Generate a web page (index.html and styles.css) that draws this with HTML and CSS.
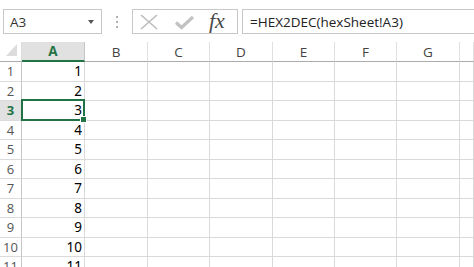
FILE: index.html
```html
<!DOCTYPE html>
<html>
<head>
<meta charset="utf-8">
<link rel="stylesheet" href="styles.css">
</head>
<body>
<div class="toolbar">
  <div class="namebox"><span class="namebox-text">A3</span><span class="dropdown"></span></div>
  <div class="sep"><span class="dot"></span><span class="dot"></span><span class="dot"></span></div>
  <div class="fxbox">
    <svg class="icon-x" width="20" height="16" viewBox="0 0 20 16"><path d="M2 1 L18 15 M18 1 L2 15" stroke="#bcbcbc" stroke-width="1.6" fill="none"/></svg>
    <svg class="icon-check" width="21" height="16" viewBox="0 0 21 16"><path d="M2 8.5 L7.5 13.5 L19 3" stroke="#c2c2c2" stroke-width="3.2" fill="none"/></svg>
    <span class="fx">fx</span>
  </div>
  <div class="formula">=HEX2DEC(hexSheet!A3)</div>
</div>
<div class="sheet">
  <div class="corner"><span class="tri"></span></div>
  <div class="colhead active">A</div>
  <div class="colhead">B</div>
  <div class="colhead">C</div>
  <div class="colhead">D</div>
  <div class="colhead">E</div>
  <div class="colhead">F</div>
  <div class="colhead">G</div>
  <div class="colhead"></div>

  <div class="rowhead">1</div><div class="cell num">1</div><div class="cell"></div><div class="cell"></div><div class="cell"></div><div class="cell"></div><div class="cell"></div><div class="cell"></div><div class="cell"></div>
  <div class="rowhead">2</div><div class="cell num">2</div><div class="cell"></div><div class="cell"></div><div class="cell"></div><div class="cell"></div><div class="cell"></div><div class="cell"></div><div class="cell"></div>
  <div class="rowhead active">3</div><div class="cell num sel">3</div><div class="cell"></div><div class="cell"></div><div class="cell"></div><div class="cell"></div><div class="cell"></div><div class="cell"></div><div class="cell"></div>
  <div class="rowhead">4</div><div class="cell num">4</div><div class="cell"></div><div class="cell"></div><div class="cell"></div><div class="cell"></div><div class="cell"></div><div class="cell"></div><div class="cell"></div>
  <div class="rowhead">5</div><div class="cell num">5</div><div class="cell"></div><div class="cell"></div><div class="cell"></div><div class="cell"></div><div class="cell"></div><div class="cell"></div><div class="cell"></div>
  <div class="rowhead">6</div><div class="cell num">6</div><div class="cell"></div><div class="cell"></div><div class="cell"></div><div class="cell"></div><div class="cell"></div><div class="cell"></div><div class="cell"></div>
  <div class="rowhead">7</div><div class="cell num">7</div><div class="cell"></div><div class="cell"></div><div class="cell"></div><div class="cell"></div><div class="cell"></div><div class="cell"></div><div class="cell"></div>
  <div class="rowhead">8</div><div class="cell num">8</div><div class="cell"></div><div class="cell"></div><div class="cell"></div><div class="cell"></div><div class="cell"></div><div class="cell"></div><div class="cell"></div>
  <div class="rowhead">9</div><div class="cell num">9</div><div class="cell"></div><div class="cell"></div><div class="cell"></div><div class="cell"></div><div class="cell"></div><div class="cell"></div><div class="cell"></div>
  <div class="rowhead">10</div><div class="cell num">10</div><div class="cell"></div><div class="cell"></div><div class="cell"></div><div class="cell"></div><div class="cell"></div><div class="cell"></div><div class="cell"></div>
  <div class="rowhead">11</div><div class="cell num">11</div><div class="cell"></div><div class="cell"></div><div class="cell"></div><div class="cell"></div><div class="cell"></div><div class="cell"></div><div class="cell"></div>
</div>
</body>
</html>
```

FILE: styles.css
```css
html, body {
  margin: 0;
  padding: 0;
  background: #fff;
  overflow: hidden;
  width: 474px;
  height: 267px;
}
body {
  font-family: "Open Sans", "Noto Sans", sans-serif;
  color: #222;
}
.toolbar {
  display: flex;
  height: 25px;
  padding: 9px 0 0 3px;
  box-sizing: content-box;
}
.namebox {
  width: 99px;
  box-sizing: border-box;
  border: 1px solid #c8c8c8;
  display: flex;
  align-items: center;
  padding-left: 6px;
  font-size: 13.5px;
  color: #333;
}
.namebox-text {
  flex: 1;
}
.dropdown {
  width: 0;
  height: 0;
  border-left: 3.5px solid transparent;
  border-right: 3.5px solid transparent;
  border-top: 4px solid #555;
  margin-right: 7px;
}
.sep {
  width: 30px;
  display: flex;
  flex-direction: column;
  align-items: center;
  justify-content: center;
  gap: 3px;
}
.dot {
  width: 2px;
  height: 2px;
  background: #b0b0b0;
}
.fxbox {
  width: 106px;
  box-sizing: border-box;
  border: 1px solid #c8c8c8;
  display: flex;
  align-items: center;
  padding-left: 6px;
}
.icon-check {
  margin-left: 15px;
}
.fx {
  margin-left: 14px;
  font-family: "Liberation Serif", "DejaVu Serif", serif;
  font-style: italic;
  font-size: 22px;
  color: #4a4a4a;
  line-height: 1;
  margin-top: -2px;
}
.formula {
  flex: 1;
  margin-left: 4px;
  margin-right: -2px;
  border: 1px solid #c8c8c8;
  display: flex;
  align-items: center;
  padding-left: 7px;
  font-size: 13.5px;
  color: #222;
}
.sheet {
  margin-top: 8px;
  display: grid;
  grid-template-columns: 22px 63px 63px 62px 63px 62px 62px 63px 1fr;
  grid-template-rows: 20px;
  grid-auto-rows: 19.5px;
}
.corner {
  border-bottom: 1px solid #ababab;
  border-right: 1px solid #dcdcdc;
  position: relative;
}
.tri {
  position: absolute;
  right: 4px;
  bottom: 5px;
  width: 0;
  height: 0;
  border-left: 11px solid transparent;
  border-bottom: 12px solid #dcdcdc;
}
.colhead {
  border-bottom: 1px solid #ababab;
  border-right: 1px solid #e0e0e0;
  display: flex;
  align-items: center;
  justify-content: center;
  font-size: 13.5px;
  color: #444;
}
.colhead.active {
  background: #e1e1e1;
  color: #217346;
  font-weight: bold;
  border-bottom: 2px solid #217346;
  border-right-color: #c6c6c6;
}
.rowhead {
  border-bottom: 1px solid #dadada;
  border-right: 1px solid #c6c6c6;
  display: flex;
  align-items: center;
  justify-content: center;
  font-size: 13px;
  color: #555;
}
.rowhead.active {
  background: #e1e1e1;
  color: #217346;
  font-weight: bold;
}
.cell {
  border-bottom: 1px solid #d9d9d9;
  border-right: 1px solid #d9d9d9;
  font-family: "Noto Sans", "Open Sans", sans-serif;
  font-size: 13.5px;
  color: #000;
}
.cell.num {
  display: flex;
  align-items: center;
  justify-content: flex-end;
  padding-right: 2px;
}
.cell.sel {
  position: relative;
}
.cell.sel::before {
  content: "";
  position: absolute;
  left: -1px;
  top: -2px;
  right: -1px;
  bottom: -1px;
  border: 2px solid #217346;
}
.cell.sel::after {
  content: "";
  position: absolute;
  right: -3px;
  bottom: -3px;
  width: 5px;
  height: 5px;
  background: #217346;
  border: 1px solid #fff;
}
```
